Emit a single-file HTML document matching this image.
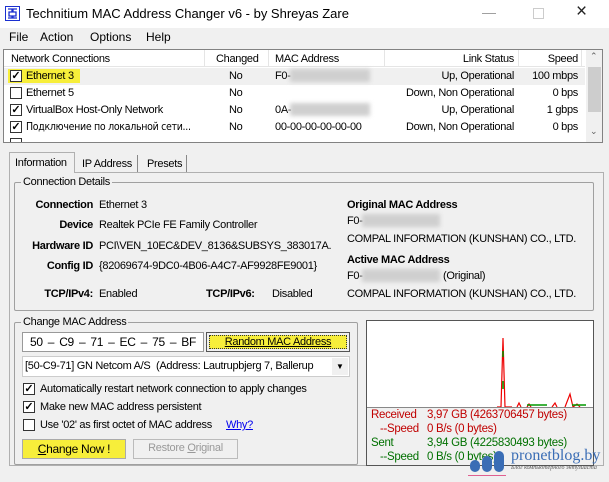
<!DOCTYPE html>
<html><head><meta charset="utf-8"><style>
*{margin:0;padding:0;box-sizing:border-box}
body{width:609px;height:482px;background:#f0f0f0;font-family:"Liberation Sans",sans-serif;font-size:11px;color:#000;position:relative;overflow:hidden}
.a{position:absolute;white-space:nowrap}
.n{font-size:11px;letter-spacing:-0.3px}
.b{font-weight:bold}
.r{text-align:right}
.blur{background:#cfcfcf;filter:blur(2px);position:absolute;height:13px}
.cb{position:absolute;width:12px;height:12px;border:1px solid #333;background:#fff;font-size:11px;line-height:10px;text-align:center;font-weight:bold}
.grp{position:absolute;border:1px solid #a0a0a0;border-radius:2px}
.gl{position:absolute;background:#f0f0f0;padding:0 2px;top:-7px;left:6px}
</style></head><body>
<!-- title -->
<div class="a" style="left:0;top:0;width:609px;height:28px;background:#fff"></div>
<svg class="a" style="left:5px;top:6px" width="15" height="15" viewBox="0 0 15 15"><rect x="0.5" y="0.5" width="14" height="14" fill="#fff" stroke="#1a2fd0"/><path d="M3 3h4v3H4v4h3v2H3M12 3H8v3h3v4H8v2h4" fill="none" stroke="#1a2fd0" stroke-width="1.3"/></svg>
<div class="a" style="left:26px;top:6px;font-size:13px">Technitium MAC Address Changer v6 - by Shreyas Zare</div>
<div class="a" style="left:482px;top:4px;font-size:14px;color:#999">—</div>
<div class="a" style="left:533px;top:8px;width:11px;height:11px;border:1px solid #ccc"></div>
<div class="a" style="left:576px;top:1px;font-size:19px;color:#222">×</div>
<!-- menu -->
<div class="a" style="left:9px;top:30px;font-size:12px">File</div>
<div class="a" style="left:40px;top:30px;font-size:12px">Action</div>
<div class="a" style="left:90px;top:30px;font-size:12px">Options</div>
<div class="a" style="left:146px;top:30px;font-size:12px">Help</div>
<!-- list -->
<div class="a" style="left:3px;top:49px;width:600px;height:94px;border:1px solid #828282;background:#fff;overflow:hidden">
 <div class="a" style="left:0;top:0;width:581px;height:17px;background:#fff;border-bottom:1px solid #e5e5e5"></div>
 <div class="a" style="left:200px;top:0;width:1px;height:17px;background:#e5e5e5"></div>
 <div class="a" style="left:264px;top:0;width:1px;height:17px;background:#e5e5e5"></div>
 <div class="a" style="left:380px;top:0;width:1px;height:17px;background:#e5e5e5"></div>
 <div class="a" style="left:514px;top:0;width:1px;height:17px;background:#e5e5e5"></div>
 <div class="a" style="left:577px;top:0;width:1px;height:17px;background:#e5e5e5"></div>
 <div class="a n" style="left:7px;top:3px">Network Connections</div>
 <div class="a n" style="left:212px;top:3px">Changed</div>
 <div class="a n" style="left:271px;top:3px">MAC Address</div>
 <div class="a n r" style="left:380px;top:3px;width:130px">Link Status</div>
 <div class="a n r" style="left:514px;top:3px;width:60px">Speed</div>
 <div class="a" style="left:0;top:18px;width:581px;height:17px;background:#f0f0f0"></div>
 <div class="a" style="left:4px;top:19px;width:72px;height:14px;background:#f7ee3a"></div>
 <div class="cb" style="left:6px;top:20px">✓</div>
 <div class="cb" style="left:6px;top:37px"></div>
 <div class="cb" style="left:6px;top:54px">✓</div>
 <div class="cb" style="left:6px;top:71px">✓</div>
 <div class="cb" style="left:6px;top:88px"></div>
 <div class="a n" style="left:22px;top:20px">Ethernet 3</div>
 <div class="a n" style="left:22px;top:37px">Ethernet 5</div>
 <div class="a n" style="left:22px;top:54px">VirtualBox Host-Only Network</div>
 <div class="a n" style="left:22px;top:71px;font-family:'DejaVu Sans Condensed','Liberation Sans',sans-serif;font-size:10.5px">Подключение по локальной сети...</div>
 <div class="a n" style="left:225px;top:20px">No</div><div class="a n" style="left:225px;top:37px">No</div><div class="a n" style="left:225px;top:54px">No</div><div class="a n" style="left:225px;top:71px">No</div>
 <div class="a n" style="left:271px;top:20px">F0-</div><div class="blur" style="left:286px;top:19px;width:80px"></div>
 <div class="a n" style="left:271px;top:54px">0A-</div><div class="blur" style="left:286px;top:53px;width:80px"></div>
 <div class="a n" style="left:271px;top:71px">00-00-00-00-00-00</div>
 <div class="a n r" style="left:380px;top:20px;width:130px">Up, Operational</div>
 <div class="a n r" style="left:380px;top:37px;width:130px">Down, Non Operational</div>
 <div class="a n r" style="left:380px;top:54px;width:130px">Up, Operational</div>
 <div class="a n r" style="left:380px;top:71px;width:130px">Down, Non Operational</div>
 <div class="a n r" style="left:514px;top:20px;width:60px">100 mbps</div>
 <div class="a n r" style="left:514px;top:37px;width:60px">0 bps</div>
 <div class="a n r" style="left:514px;top:54px;width:60px">1 gbps</div>
 <div class="a n r" style="left:514px;top:71px;width:60px">0 bps</div>
 <div class="a" style="left:582px;top:0;width:17px;height:92px;background:#f0f0f0"></div>
 <div class="a" style="left:584px;top:17px;width:13px;height:45px;background:#cdcdcd"></div>
 <div class="a" style="left:586px;top:1px;font-size:9px;color:#606060">⌃</div>
 <div class="a" style="left:586px;top:76px;font-size:9px;color:#606060">⌄</div>
</div>
<!-- tabs -->
<div class="a" style="left:9px;top:172px;width:595px;height:294px;border:1px solid #b0b0b0;background:#f0f0f0"></div>
<div class="a" style="left:9px;top:152px;width:66px;height:21px;border:1px solid #b0b0b0;border-bottom:none;background:#f0f0f0"></div>
<div class="a n" style="left:15px;top:157px">Information</div>
<div class="a" style="left:76px;top:155px;width:62px;height:17px;border-right:1px solid #888"></div>
<div class="a n" style="left:82px;top:158px">IP Address</div>
<div class="a" style="left:139px;top:155px;width:48px;height:17px;border-right:1px solid #888"></div>
<div class="a n" style="left:147px;top:158px">Presets</div>
<!-- connection details -->
<div class="grp" style="left:14px;top:182px;width:580px;height:129px"><div class="gl n">Connection Details</div></div>
<div class="a n b r" style="left:10px;top:199px;width:83px">Connection</div><div class="a n" style="left:99px;top:199px">Ethernet 3</div>
<div class="a n b r" style="left:10px;top:219px;width:83px">Device</div><div class="a n" style="left:99px;top:219px">Realtek PCIe FE Family Controller</div>
<div class="a n b r" style="left:10px;top:240px;width:83px">Hardware ID</div><div class="a n" style="left:99px;top:240px">PCI\VEN_10EC&amp;DEV_8136&amp;SUBSYS_383017A.</div>
<div class="a n b r" style="left:10px;top:260px;width:83px">Config ID</div><div class="a n" style="left:99px;top:260px">{82069674-9DC0-4B06-A4C7-AF9928FE9001}</div>
<div class="a n b r" style="left:10px;top:288px;width:83px">TCP/IPv4:</div><div class="a n" style="left:99px;top:288px">Enabled</div>
<div class="a n b" style="left:206px;top:288px">TCP/IPv6:</div><div class="a n" style="left:272px;top:288px">Disabled</div>
<div class="a n b" style="left:347px;top:199px">Original MAC Address</div>
<div class="a n" style="left:347px;top:215px">F0-</div><div class="blur" style="left:362px;top:214px;width:78px"></div>
<div class="a n" style="left:347px;top:233px">COMPAL INFORMATION (KUNSHAN) CO., LTD.</div>
<div class="a n b" style="left:347px;top:254px">Active MAC Address</div>
<div class="a n" style="left:347px;top:270px">F0-</div><div class="blur" style="left:362px;top:269px;width:78px"></div><div class="a n" style="left:443px;top:270px">(Original)</div>
<div class="a n" style="left:347px;top:288px">COMPAL INFORMATION (KUNSHAN) CO., LTD.</div>
<!-- change mac -->
<div class="grp" style="left:14px;top:322px;width:344px;height:143px"><div class="gl n">Change MAC Address</div></div>
<div class="a" style="left:22px;top:332px;width:182px;height:20px;border:1px solid #999;background:#fff"></div>
<div class="a n" style="left:30px;top:335px;font-size:12px;word-spacing:2px">50 – C9 – 71 – EC – 75 – BF</div>
<div class="a" style="left:206px;top:332px;width:144px;height:20px;border:1px solid #555;background:#f0f0f0"></div>
<div class="a" style="left:209px;top:335px;width:138px;height:14px;background:#f7ee3a;border:1px dotted #333"></div>
<div class="a n" style="left:206px;top:336px;width:144px;text-align:center;text-decoration:underline">Random MAC Address</div>
<div class="a" style="left:22px;top:356px;width:328px;height:21px;border:1px solid #ccc;background:#fff"></div>
<div class="a n" style="left:25px;top:360px">[50-C9-71] GN Netcom A/S&nbsp; (Address: Lautrupbjerg 7, Ballerup</div>
<div class="a" style="left:332px;top:358px;width:16px;height:17px;background:#f0f0f0;font-size:8px;text-align:center;line-height:17px">▼</div>
<div class="cb" style="left:23px;top:383px">✓</div><div class="a n" style="left:40px;top:383px">Automatically restart network connection to apply changes</div>
<div class="cb" style="left:23px;top:401px">✓</div><div class="a n" style="left:40px;top:401px">Make new MAC address persistent</div>
<div class="cb" style="left:23px;top:419px"></div><div class="a n" style="left:40px;top:419px">Use '02' as first octet of MAC address</div>
<div class="a n" style="left:226px;top:419px;color:#0000ee;text-decoration:underline">Why?</div>
<div class="a" style="left:22px;top:439px;width:104px;height:20px;background:#f7ee3a;border:1px solid #aaa"></div>
<div class="a n" style="left:22px;top:442px;width:104px;text-align:center;font-size:12px"><u>C</u>hange Now !</div>
<div class="a" style="left:133px;top:439px;width:105px;height:20px;border:1px solid #bbb;background:#f0f0f0"></div>
<div class="a n" style="left:133px;top:442px;width:105px;text-align:center;color:#999">Restore <u>O</u>riginal</div>
<!-- graph -->
<div class="a" style="left:366px;top:320px;width:228px;height:146px;border:1px solid #555;background:#f0f0f0"></div>
<div class="a" style="left:367px;top:321px;width:226px;height:86px;background:#fff"></div>
<svg class="a" style="left:367px;top:321px" width="226" height="88"><path d="M130 86 L134 86 L136 17 L138 86 L145 86 M150 86 L152 82 L154 86 M160 86 L162 83 L164 86 M185 86 L188 82 L190 86 M198 86 L203 73 L206 86 L210 83 L213 86" fill="none" stroke="#e00" stroke-width="1.2"/><path d="M136 60v8M136 30v6M160 84h20M205 84h14" stroke="#090" stroke-width="1.5"/></svg>
<div class="a" style="left:367px;top:407px;width:226px;height:1px;background:#888"></div>
<div class="a n" style="left:371px;top:409px;color:#c00000;font-size:11.5px">Received</div><div class="a n" style="left:427px;top:409px;color:#c00000;font-size:11.5px">3,97 GB (4263706457 bytes)</div>
<div class="a n" style="left:380px;top:423px;color:#c00000;font-size:11.5px">--Speed</div><div class="a n" style="left:427px;top:423px;color:#c00000;font-size:11.5px">0 B/s (0 bytes)</div>
<div class="a n" style="left:371px;top:437px;color:#007000;font-size:11.5px">Sent</div><div class="a n" style="left:427px;top:437px;color:#007000;font-size:11.5px">3,94 GB (4225830493 bytes)</div>
<div class="a n" style="left:380px;top:451px;color:#007000;font-size:11.5px">--Speed</div><div class="a n" style="left:427px;top:451px;color:#007000;font-size:11.5px">0 B/s (0 bytes)</div>
<!-- watermark -->
<div class="a" style="left:470px;top:460px;width:10px;height:12px;border-radius:5px;background:#3a6db5"></div>
<div class="a" style="left:482px;top:456px;width:10px;height:16px;border-radius:5px;background:#3a6db5"></div>
<div class="a" style="left:494px;top:451px;width:10px;height:21px;border-radius:5px;background:#3a6db5"></div>
<div class="a" style="left:468px;top:475px;width:38px;height:1px;background:#e06090"></div>
<div class="a" style="left:511px;top:447px;font-family:'Liberation Serif',serif;font-size:16px;color:#3a6db5">pronetblog.by</div>
<div class="a" style="left:511px;top:465px;font-family:'Liberation Serif',serif;font-size:6px;font-style:italic;color:#555">Блог компьютерного энтузиаста</div>
</body></html>
